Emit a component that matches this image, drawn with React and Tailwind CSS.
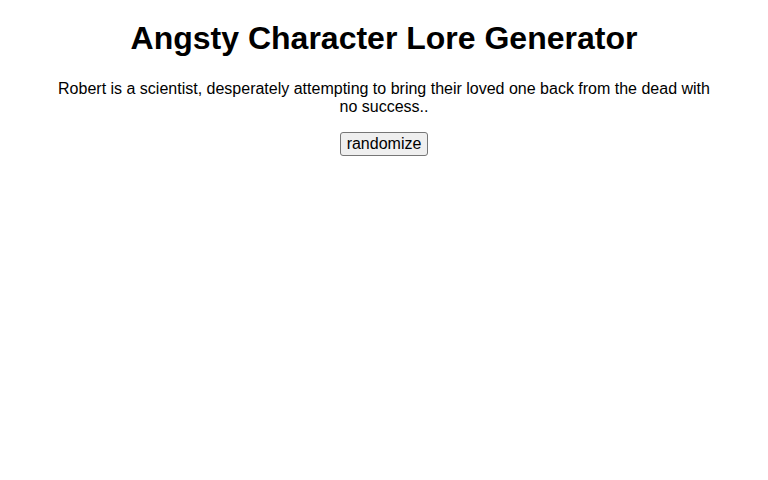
import React, { useState } from "react";

const lore = [
  "Robert is a scientist, desperately attempting to bring their loved one back from the dead with no success..",
];

export default function App() {
  const [idx, setIdx] = useState(0);

  return (
    <div className="min-h-screen bg-white text-black text-center font-['Liberation_Sans',Arial,sans-serif] px-[48px]">
      <h1 className="text-[32px] leading-[1.15] font-bold pt-[20px]">
        Angsty Character Lore Generator
      </h1>
      <p className="text-[16px] leading-[1.15] mt-[23px]">{lore[idx]}</p>
      <button
        onClick={() => setIdx((idx + 1) % lore.length)}
        className="mt-[15px] bg-[#efefef] border border-[#767676] rounded-[3px] px-[6px] py-[2px] text-[16px] leading-[1.15] text-black"
      >
        randomize
      </button>
    </div>
  );
}
